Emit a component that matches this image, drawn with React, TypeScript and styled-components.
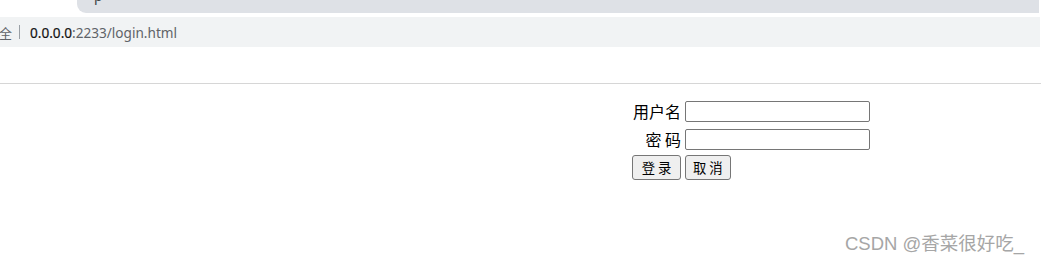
import React from "react";
import styled, { createGlobalStyle } from "styled-components";

const GlobalStyle = createGlobalStyle`
   html, body {
      margin: 0;
      padding: 0;
      background: #ffffff;
   }
   body {
      width: 1041px;
      height: 261px;
      overflow: hidden;
      font-family: "Noto Sans", "Noto Sans CJK SC", sans-serif;
   }
`;

const Page = () => {
   return (
      <Screen>
         <GlobalStyle />
         <TabStrip>
            <TabGap />
            <TabArea>
               <TabTitle>p</TabTitle>
            </TabArea>
         </TabStrip>

         <AddressBar>
            <Secure>全</Secure>
            <Divider />
            <Url>
               <Host>0.0.0.0</Host>
               <Path>:2233/login.html</Path>
            </Url>
         </AddressBar>

         <Toolbar />

         <Content>
            <LoginForm>
               <Label>用户名</Label>
               <Field type="text" />
               <Label>密 码</Label>
               <Field type="password" />
               <Button $fill>登 录</Button>
               <Button>取 消</Button>
            </LoginForm>
         </Content>

         <Watermark>CSDN @香菜很好吃_</Watermark>
      </Screen>
   );
};

const Screen = styled.div`
   position: relative;
   width: 1041px;
   height: 261px;
   overflow: hidden;
`;

const TabStrip = styled.div`
   display: flex;
   height: 13px;
`;

const TabGap = styled.div`
   width: 77px;
   background: #ffffff;
`;

const TabArea = styled.div`
   flex: 1;
   position: relative;
   background: #dee1e6;
   border-bottom-left-radius: 9px;
   margin-right: 2px;
   overflow: hidden;
`;

const TabTitle = styled.span`
   position: absolute;
   left: 17px;
   top: -14px;
   font-size: 14px;
   color: #3c4043;
`;

const AddressBar = styled.div`
   display: flex;
   align-items: center;
   height: 30px;
   margin-top: 4px;
   margin-right: 1px;
   background: #f1f3f4;
   font-size: 13.6px;
`;

const Secure = styled.span`
   margin-left: -1px;
   color: #5f6368;
   font-family: "Noto Sans CJK SC", sans-serif;
   font-size: 13px;
`;

const Divider = styled.span`
   width: 1px;
   height: 14px;
   margin: 0 10px 0 7px;
   background: #9aa0a6;
`;

const Url = styled.span`
   letter-spacing: 0;
`;

const Host = styled.span`
   color: #111111;
   -webkit-text-stroke: 0.2px #111111;
`;

const Path = styled.span`
   color: #5f6368;
`;

const Toolbar = styled.div`
   height: 36px;
   border-bottom: 1px solid #d6d6d6;
`;

const Content = styled.div`
   padding: 15px 0 0 632px;
`;

const LoginForm = styled.div`
   display: grid;
   grid-template-columns: 49px 185px;
   grid-template-rows: 24px 24px 25px;
   column-gap: 4px;
   row-gap: 4px;
   align-items: center;
`;

const Label = styled.span`
   text-align: right;
   font-family: "Noto Sans CJK SC", sans-serif;
   font-size: 16px;
   line-height: 20px;
   color: #000000;
`;

const Field = styled.input`
   box-sizing: border-box;
   width: 185px;
   height: 21px;
   margin: 0;
   padding: 1px 2px;
   border: 1px solid #767676;
   border-radius: 2px;
   background: #ffffff;
`;

const Button = styled.button<{ $fill?: boolean }>`
   justify-self: ${(p) => (p.$fill ? "stretch" : "start")};
   box-sizing: border-box;
   height: 25px;
   margin: 0;
   padding: 1px 7px;
   border: 1px solid #767676;
   border-radius: 3px;
   background: #efefef;
   font-family: "Noto Sans CJK SC", sans-serif;
   font-size: 13.33px;
   color: #000000;
`;

const Watermark = styled.div`
   position: absolute;
   left: 845px;
   top: 229px;
   font-family: "Liberation Sans", "Noto Sans CJK SC", sans-serif;
   font-size: 18.5px;
   color: #a6a6a6;
   white-space: nowrap;
`;

export default function App() {
   return <Page />;
}
